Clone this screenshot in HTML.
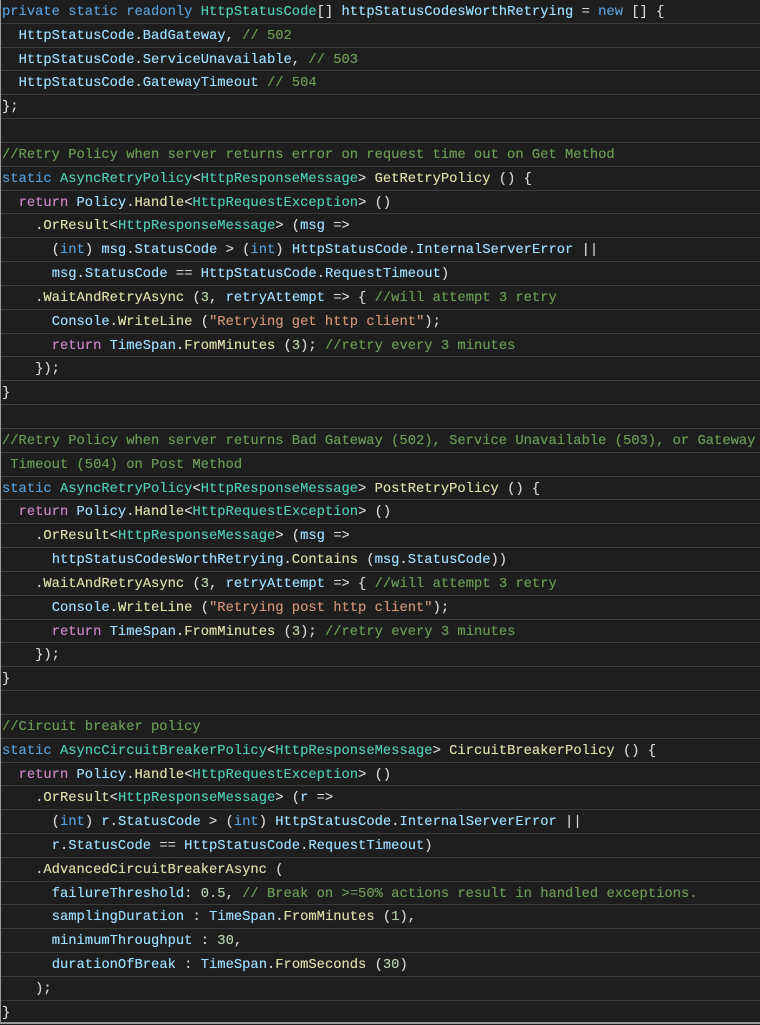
<!DOCTYPE html>
<html><head><meta charset="utf-8"><style>
html,body{margin:0;padding:0;background:#1e1e1e;}
body{width:760px;height:1024px;overflow:hidden;position:relative;border-left:1px solid #9a9a9a;box-sizing:border-box;border-bottom:2px solid #9a9a9a}
.l{height:23.83px;box-sizing:border-box;border-bottom:1px solid #3c3c3c;font-family:"Liberation Mono",monospace;font-size:13.8px;line-height:20px;padding-top:3px;white-space:pre;color:#d4d4d4;padding-left:1px;overflow:hidden;text-shadow:0 0 0.4px currentColor}
.k{color:#569cd6}.t{color:#4ec9b0}.v{color:#9cdcfe}.m{color:#dcdcaa}.s{color:#ce9178}.c{color:#6a9955}.r{color:#c586c0}.n{color:#b5cea8}
</style></head><body>
<div class="l"><span class="k">private static readonly</span> <span class="t">HttpStatusCode</span>[] <span class="v">httpStatusCodesWorthRetrying</span> = <span class="k">new</span> [] {</div>
<div class="l">  <span class="v">HttpStatusCode</span>.<span class="v">BadGateway</span>, <span class="c">// 502</span></div>
<div class="l">  <span class="v">HttpStatusCode</span>.<span class="v">ServiceUnavailable</span>, <span class="c">// 503</span></div>
<div class="l">  <span class="v">HttpStatusCode</span>.<span class="v">GatewayTimeout</span> <span class="c">// 504</span></div>
<div class="l">};</div>
<div class="l"> </div>
<div class="l"><span class="c">//Retry Policy when server returns error on request time out on Get Method</span></div>
<div class="l"><span class="k">static</span> <span class="t">AsyncRetryPolicy</span>&lt;<span class="t">HttpResponseMessage</span>&gt; <span class="m">GetRetryPolicy</span> () {</div>
<div class="l">  <span class="r">return</span> <span class="v">Policy</span>.<span class="m">Handle</span>&lt;<span class="t">HttpRequestException</span>&gt; ()</div>
<div class="l">    .<span class="m">OrResult</span>&lt;<span class="t">HttpResponseMessage</span>&gt; (<span class="v">msg</span> =&gt;</div>
<div class="l">      (<span class="k">int</span>) <span class="v">msg</span>.<span class="v">StatusCode</span> &gt; (<span class="k">int</span>) <span class="v">HttpStatusCode</span>.<span class="v">InternalServerError</span> ||</div>
<div class="l">      <span class="v">msg</span>.<span class="v">StatusCode</span> == <span class="v">HttpStatusCode</span>.<span class="v">RequestTimeout</span>)</div>
<div class="l">    .<span class="m">WaitAndRetryAsync</span> (<span class="n">3</span>, <span class="v">retryAttempt</span> =&gt; { <span class="c">//will attempt 3 retry</span></div>
<div class="l">      <span class="v">Console</span>.<span class="m">WriteLine</span> (<span class="s">"Retrying get http client"</span>);</div>
<div class="l">      <span class="r">return</span> <span class="v">TimeSpan</span>.<span class="m">FromMinutes</span> (<span class="n">3</span>); <span class="c">//retry every 3 minutes</span></div>
<div class="l">    });</div>
<div class="l">}</div>
<div class="l"> </div>
<div class="l"><span class="c">//Retry Policy when server returns Bad Gateway (502), Service Unavailable (503), or Gateway</span></div>
<div class="l"><span class="c"> Timeout (504) on Post Method</span></div>
<div class="l"><span class="k">static</span> <span class="t">AsyncRetryPolicy</span>&lt;<span class="t">HttpResponseMessage</span>&gt; <span class="m">PostRetryPolicy</span> () {</div>
<div class="l">  <span class="r">return</span> <span class="v">Policy</span>.<span class="m">Handle</span>&lt;<span class="t">HttpRequestException</span>&gt; ()</div>
<div class="l">    .<span class="m">OrResult</span>&lt;<span class="t">HttpResponseMessage</span>&gt; (<span class="v">msg</span> =&gt;</div>
<div class="l">      <span class="v">httpStatusCodesWorthRetrying</span>.<span class="m">Contains</span> (<span class="v">msg</span>.<span class="v">StatusCode</span>))</div>
<div class="l">    .<span class="m">WaitAndRetryAsync</span> (<span class="n">3</span>, <span class="v">retryAttempt</span> =&gt; { <span class="c">//will attempt 3 retry</span></div>
<div class="l">      <span class="v">Console</span>.<span class="m">WriteLine</span> (<span class="s">"Retrying post http client"</span>);</div>
<div class="l">      <span class="r">return</span> <span class="v">TimeSpan</span>.<span class="m">FromMinutes</span> (<span class="n">3</span>); <span class="c">//retry every 3 minutes</span></div>
<div class="l">    });</div>
<div class="l">}</div>
<div class="l"> </div>
<div class="l"><span class="c">//Circuit breaker policy</span></div>
<div class="l"><span class="k">static</span> <span class="t">AsyncCircuitBreakerPolicy</span>&lt;<span class="t">HttpResponseMessage</span>&gt; <span class="m">CircuitBreakerPolicy</span> () {</div>
<div class="l">  <span class="r">return</span> <span class="v">Policy</span>.<span class="m">Handle</span>&lt;<span class="t">HttpRequestException</span>&gt; ()</div>
<div class="l">    .<span class="m">OrResult</span>&lt;<span class="t">HttpResponseMessage</span>&gt; (<span class="v">r</span> =&gt;</div>
<div class="l">      (<span class="k">int</span>) <span class="v">r</span>.<span class="v">StatusCode</span> &gt; (<span class="k">int</span>) <span class="v">HttpStatusCode</span>.<span class="v">InternalServerError</span> ||</div>
<div class="l">      <span class="v">r</span>.<span class="v">StatusCode</span> == <span class="v">HttpStatusCode</span>.<span class="v">RequestTimeout</span>)</div>
<div class="l">    .<span class="m">AdvancedCircuitBreakerAsync</span> (</div>
<div class="l">      <span class="v">failureThreshold</span>: <span class="n">0.5</span>, <span class="c">// Break on &gt;=50% actions result in handled exceptions.</span></div>
<div class="l">      <span class="v">samplingDuration</span> : <span class="v">TimeSpan</span>.<span class="m">FromMinutes</span> (<span class="n">1</span>),</div>
<div class="l">      <span class="v">minimumThroughput</span> : <span class="n">30</span>,</div>
<div class="l">      <span class="v">durationOfBreak</span> : <span class="v">TimeSpan</span>.<span class="m">FromSeconds</span> (<span class="n">30</span>)</div>
<div class="l">    );</div>
<div class="l" style="border-bottom:none">}</div>
</body></html>
